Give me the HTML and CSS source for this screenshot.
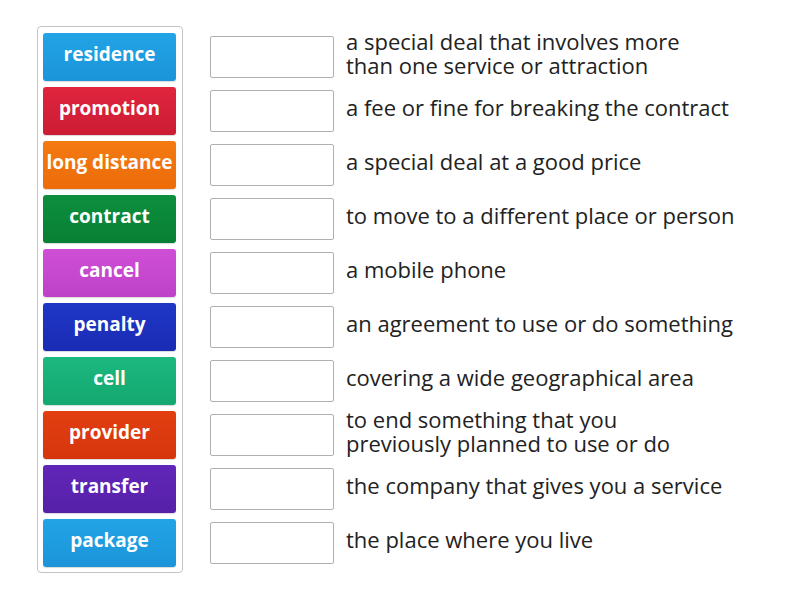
FILE: index.html
```html
<!DOCTYPE html>
<html lang="en">
<head>
<meta charset="UTF-8">
<title>Match up</title>
<link rel="stylesheet" href="styles.css">
</head>
<body>

<div class="game">
    <div class="tiles">
        <div class="tile blue">residence</div>
        <div class="tile red">promotion</div>
        <div class="tile orange">long distance</div>
        <div class="tile green">contract</div>
        <div class="tile magenta">cancel</div>
        <div class="tile navy">penalty</div>
        <div class="tile teal">cell</div>
        <div class="tile vermilion">provider</div>
        <div class="tile purple">transfer</div>
        <div class="tile blue">package</div>
    </div>

    <div class="rows">
        <div class="row"><div class="slot"></div><p>a special deal that involves more<br>than one service or attraction</p></div>
        <div class="row"><div class="slot"></div><p>a fee or fine for breaking the contract</p></div>
        <div class="row"><div class="slot"></div><p>a special deal at a good price</p></div>
        <div class="row"><div class="slot"></div><p>to move to a different place or person</p></div>
        <div class="row"><div class="slot"></div><p>a mobile phone</p></div>
        <div class="row"><div class="slot"></div><p>an agreement to use or do something</p></div>
        <div class="row"><div class="slot"></div><p>covering a wide geographical area</p></div>
        <div class="row"><div class="slot"></div><p>to end something that you<br>previously planned to use or do</p></div>
        <div class="row"><div class="slot"></div><p>the company that gives you a service</p></div>
        <div class="row"><div class="slot"></div><p>the place where you live</p></div>
    </div>
</div>

</body>
</html>
```

FILE: styles.css
```css
body {
    margin: 0;
    padding: 0;
    background-color: #fff;
    font-family: "Open Sans", Arial, sans-serif;
}

.game {
    display: flex;
    align-items: flex-start;
    padding: 26px 0 0 37px;
}

.tiles {
    display: flex;
    flex-direction: column;
    gap: 6px;
    padding: 6px 6px 5px 5px;
    border: 1px solid #c4c4c4;
    border-radius: 4px;
}

.tile {
    width: 133px;
    height: 48px;
    box-sizing: border-box;
    padding-bottom: 6px;
    display: flex;
    align-items: center;
    justify-content: center;
    border-radius: 3px;
    color: #fff;
    font-size: 19px;
    font-weight: bold;
    white-space: nowrap;
    box-shadow: 0 1px 1px rgba(0,0,0,0.15);
}

.blue { background: linear-gradient(#22a4e6, #1b94da); }
.red { background: linear-gradient(#e0243e, #cc1c34); }
.orange { background: linear-gradient(#f47a12, #ec6c0a); }
.green { background: linear-gradient(#0d8f3e, #087f34); }
.magenta { background: linear-gradient(#cf4fd6, #bd42c8); }
.navy { background: linear-gradient(#1f36c6, #1a2cb4); }
.teal { background: linear-gradient(#1bb880, #14a86f); }
.vermilion { background: linear-gradient(#e23e12, #d6350c); }
.purple { background: linear-gradient(#6126b8, #5620a8); }

.rows {
    display: flex;
    flex-direction: column;
    gap: 6px;
    padding-top: 7px;
    margin-left: 27px;
}

.row {
    height: 48px;
    display: flex;
    align-items: center;
}

.slot {
    width: 122px;
    height: 40px;
    border: 1px solid #b0b0b0;
    border-radius: 2px;
    background: #fff;
    flex-shrink: 0;
}

.row p {
    margin: 0 0 0 12px;
    padding-bottom: 8px;
    font-size: 22px;
    line-height: 24px;
    color: #222;
    white-space: nowrap;
}
```
